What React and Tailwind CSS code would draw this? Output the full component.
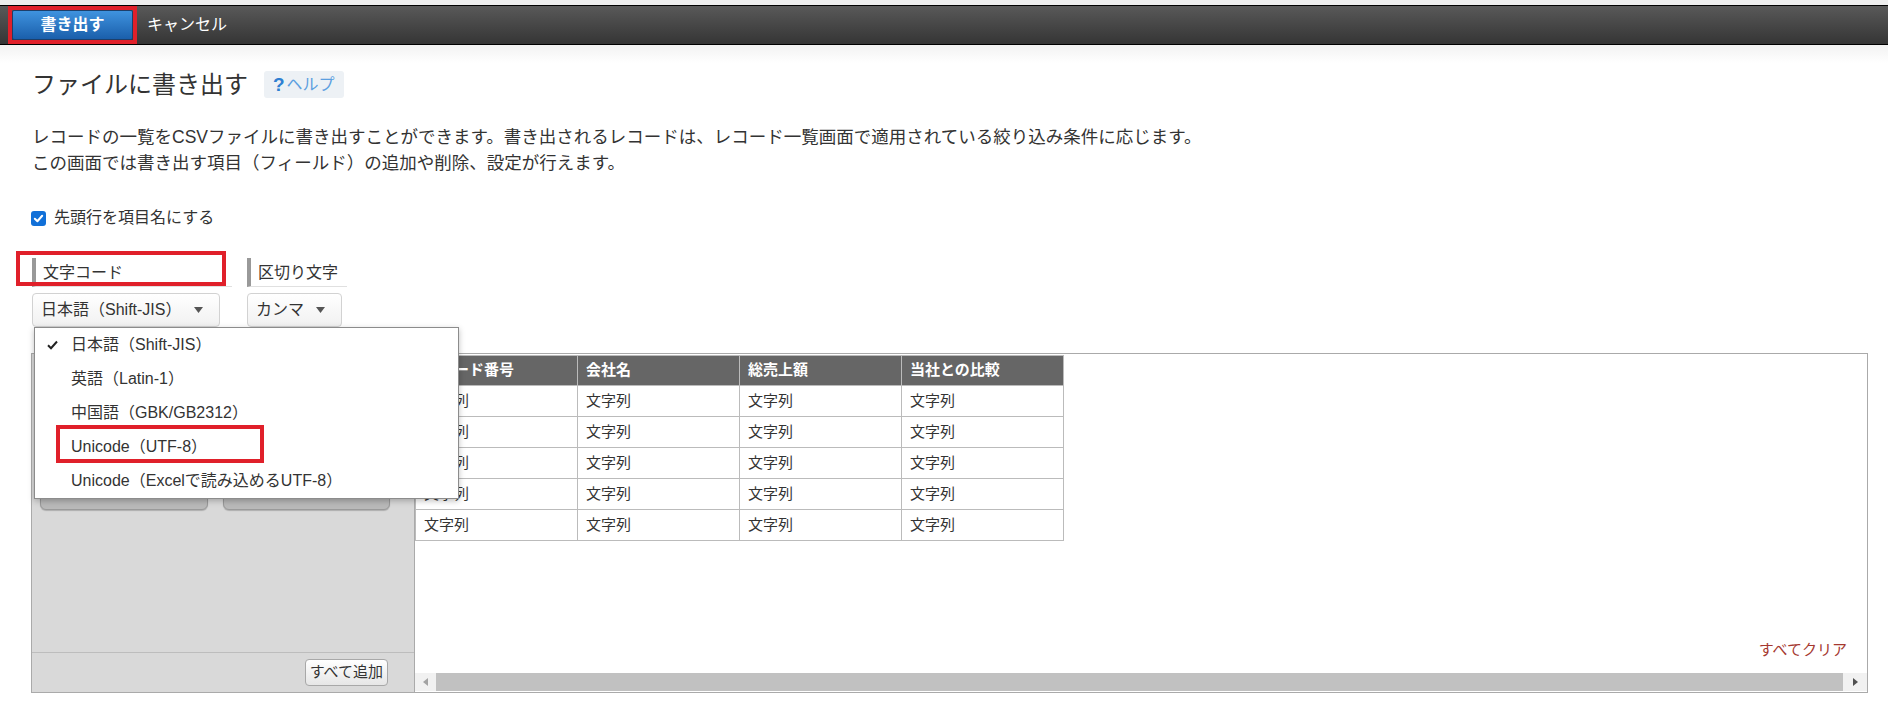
import React from "react";

const FONT = "font-['Liberation_Sans','Noto_Sans_CJK_JP',sans-serif]";

function Arrow() {
  return (
    <svg width="9" height="6" viewBox="0 0 9 6" className="shrink-0">
      <polygon points="0,0 9,0 4.5,6" fill="#555" />
    </svg>
  );
}

export default function App() {
  const menuItems = [
    { label: "日本語（Shift-JIS）", checked: true },
    { label: "英語（Latin-1）" },
    { label: "中国語（GBK/GB2312）" },
    { label: "Unicode（UTF-8）", highlight: true },
    { label: "Unicode（Excelで読み込めるUTF-8）" },
  ];
  const cols = ["レコード番号", "会社名", "総売上額", "当社との比較"];
  const chips = [0, 1, 2, 3, 4, 5];

  return (
    <div className={`${FONT} w-[1888px] h-[705px] bg-white text-[#333] overflow-hidden`}>
      <div className="h-[5px] bg-[#ededed]" />
      <header className="h-[40px] bg-gradient-to-b from-[#595959] to-[#353535] border-y border-black flex items-stretch px-[8px]">
        <div className="w-[129px] border-[4px] border-[#e0202a] flex">
          <div className="flex-1 bg-gradient-to-b from-[#3f93df] to-[#1a5fab] border border-[#1d3f6a] rounded-[2px] flex items-center justify-center text-white font-bold text-[16px]">
            書き出す
          </div>
        </div>
        <div className="ml-[10px] flex items-center text-white text-[16px]">キャンセル</div>
      </header>
      <div className="h-0 relative">
        <div className="absolute inset-x-0 top-0 h-[18px] bg-gradient-to-b from-[#f2f2f2] to-white" />
      </div>

      <main className="relative pl-[32px] pr-[20px]">
        <div className="pt-[25px] flex items-center h-[54px]">
          <h1 className="text-[24px] leading-[29px] text-[#333] font-normal">ファイルに書き出す</h1>
          <div className="ml-[16px] h-[27px] px-[9px] bg-[#edf1f5] rounded-[3px] flex items-center gap-[2px]">
            <span className="text-[#2f7fd1] font-bold text-[19px] leading-none">?</span>
            <span className="text-[#5c9fe0] text-[16px] leading-none">ヘルプ</span>
          </div>
        </div>

        <div className="mt-[25px] text-[17.5px] leading-[26px] whitespace-nowrap">
          <p>レコードの一覧をCSVファイルに書き出すことができます。書き出されるレコードは、レコード一覧画面で適用されている絞り込み条件に応じます。</p>
          <p>この画面では書き出す項目（フィールド）の追加や削除、設定が行えます。</p>
        </div>

        <div className="mt-[30px] h-[24px] flex items-center -ml-[1px]">
          <div className="w-[15px] h-[15px] bg-[#1170d8] rounded-[3px] flex items-center justify-center">
            <svg width="11" height="11" viewBox="0 0 12 12">
              <path d="M2 6.3 L4.8 9 L10 3" stroke="white" strokeWidth="2.2" fill="none" strokeLinecap="round" strokeLinejoin="round" />
            </svg>
          </div>
          <span className="ml-[8px] text-[16px]">先頭行を項目名にする</span>
        </div>

        <div className="mt-[28px] flex gap-[15px]">
          <div className="w-[200px]">
            <div className="relative h-[29px] border-l-[4px] border-l-[#999] border-b border-b-[#e0e0e0] pl-[7px] text-[16px] leading-[29px]">
              文字コード
              <div className="absolute left-[-20px] top-[-7px] w-[210px] h-[35px] border-[4px] border-[#e0202a]" />
            </div>
            <div className="relative mt-[6px]">
              <div className="w-[188px] h-[34px] border border-[#d2d2d2] rounded-[4px] bg-gradient-to-b from-white to-[#f1f1f1] flex items-center justify-between pl-[8px] pr-[16px] text-[16px]">
                <span>日本語（Shift-JIS）</span>
                <Arrow />
              </div>
              <div className="absolute left-[2px] top-full w-[425px] bg-white border border-[#8c8c8c] shadow-[0_2px_6px_rgba(0,0,0,0.25)] z-20">
                {menuItems.map((it) => (
                  <div key={it.label} className="relative h-[34px] flex items-center text-[16px]">
                    <div className="w-[36px] pl-[12px] flex items-center">
                      {it.checked && (
                        <svg width="11" height="10" viewBox="0 0 11 10">
                          <path d="M1 5.2 L4 8.2 L10 1.5" stroke="#222" strokeWidth="2" fill="none" />
                        </svg>
                      )}
                    </div>
                    <span>{it.label}</span>
                    {it.highlight && (
                      <div className="absolute left-[21px] top-[-5px] w-[208px] h-[38px] border-[4px] border-[#e0202a]" />
                    )}
                  </div>
                ))}
              </div>
            </div>
          </div>
          <div className="w-[100px]">
            <div className="h-[29px] border-l-[4px] border-l-[#999] border-b border-b-[#e0e0e0] pl-[7px] text-[16px] leading-[29px]">
              区切り文字
            </div>
            <div className="mt-[6px] w-[95px] h-[34px] border border-[#d2d2d2] rounded-[4px] bg-gradient-to-b from-white to-[#f1f1f1] flex items-center justify-between pl-[8px] pr-[16px] text-[16px]">
              <span>カンマ</span>
              <Arrow />
            </div>
          </div>
        </div>

        <div className="mt-[26px] -ml-[1px] h-[340px] border border-[#aaa] flex">
          <div className="w-[383px] border-r border-[#aaa] bg-[#d9d9d9] flex flex-col">
            <div className="flex-1 grid grid-cols-2 content-start gap-x-[15px] gap-y-[10px] pl-[8px] pr-[24px] pt-[22px]">
              {chips.map((c) => (
                <div key={c} className="h-[38px] bg-[#b9b9b9] border border-[#9a9a9a] rounded-[6px] shadow-[0_1px_1px_rgba(0,0,0,0.2)]" />
              ))}
            </div>
            <div className="h-[40px] border-t border-[#bdbdbd] flex items-center justify-end pr-[26px]">
              <button className="h-[27px] px-[4px] border border-[#a8a8a8] rounded-[4px] bg-gradient-to-b from-white to-[#e6e6e6] text-[15px] text-[#333]">
                すべて追加
              </button>
            </div>
          </div>

          <div className="flex-1 flex flex-col min-w-0">
            <table className="border-collapse mt-[1px] text-[15px] w-[649px] table-fixed">
              <thead>
                <tr>
                  {cols.map((c) => (
                    <th key={c} className="h-[30px] bg-[#666] text-white font-bold text-left px-[8px] border border-[#bbb]">
                      {c}
                    </th>
                  ))}
                </tr>
              </thead>
              <tbody>
                {[0, 1, 2, 3, 4].map((r) => (
                  <tr key={r}>
                    {cols.map((c) => (
                      <td key={c} className="h-[31px] px-[8px] border border-[#bbb] font-normal">
                        文字列
                      </td>
                    ))}
                  </tr>
                ))}
              </tbody>
            </table>
            <div className="flex-1" />
            <div className="flex justify-end pr-[20px] mb-[13px]">
              <span className="text-[15px] leading-[20px] text-[#a5382f]">すべてクリア</span>
            </div>
            <div className="h-[18px] mb-[1px] bg-[#f1f1f1] flex items-stretch">
              <div className="w-[21px] flex items-center justify-center">
                <svg width="5" height="8" viewBox="0 0 5 8"><polygon points="5,0 5,8 0,4" fill="#a3a3a3" /></svg>
              </div>
              <div className="flex-1 bg-[#c1c1c1]" />
              <div className="w-[24px] flex items-center justify-center">
                <svg width="5" height="8" viewBox="0 0 5 8"><polygon points="0,0 0,8 5,4" fill="#505050" /></svg>
              </div>
            </div>
          </div>
        </div>
      </main>
    </div>
  );
}
